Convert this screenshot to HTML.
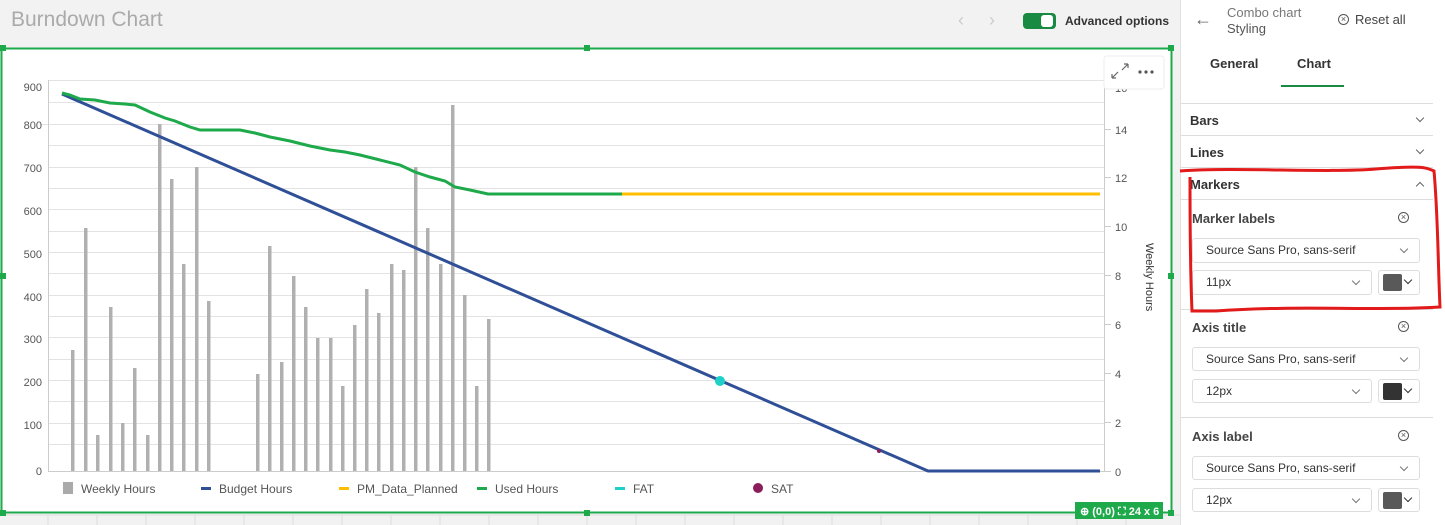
<!DOCTYPE html>
<html><head><meta charset="utf-8"><style>
*{box-sizing:border-box;margin:0;padding:0}
body{width:1445px;height:525px;overflow:hidden;background:#f2f2f2;font-family:"Liberation Sans",sans-serif;position:relative}
.abs{position:absolute}
.panel{left:1180px;top:0;width:265px;height:525px;background:#fff;border-left:1px solid #e0e0e0}
.row{position:absolute;left:0;width:252px;height:32px;border-top:1px solid #ddd;font-size:13px;font-weight:bold;color:#333;padding:9px 0 0 9px}
.chev{position:absolute;right:10px;top:11px;width:6px;height:6px;border-right:1.4px solid #666;border-bottom:1.4px solid #666;transform:rotate(45deg)}
.chevu{transform:rotate(225deg);top:15px}
.sel{position:absolute;border:1px solid #ddd;border-radius:3px;background:#fff;font-size:12px;color:#333;padding:0 0 0 13px;line-height:23px}
.sel .chev{top:7px;right:12px;width:6px;height:6px;border-color:#777;border-width:1.3px}
.sw{position:absolute;border:1px solid #ddd;border-radius:3px;width:42px;height:24px;background:#fff}
.sw i{position:absolute;left:4px;top:3px;width:19px;height:17px;border-radius:2px}
.sw .chev{top:6px;right:8px;width:6px;height:6px;border-color:#333;border-width:1.6px}
.h{position:absolute;left:11px;font-size:13px;font-weight:bold;color:#444}
.x{position:absolute;width:11px;height:11px;border:1.3px solid #555;border-radius:50%;font-size:9px;line-height:8px;text-align:center;color:#555}
</style></head><body>
<div class="abs" style="left:11px;top:8px;font-size:21px;color:#aaa">Burndown Chart</div>
<div class="abs" style="left:958px;top:10px;font-size:18px;color:#ccc">‹</div>
<div class="abs" style="left:989px;top:10px;font-size:18px;color:#ccc">›</div>
<div class="abs" style="left:1023px;top:13px;width:33px;height:16px;background:#188a42;border-radius:4px"><div class="abs" style="left:18px;top:2px;width:12px;height:12px;background:#fff;border-radius:3px"></div></div>
<div class="abs" style="left:1065px;top:14px;font-size:12px;font-weight:bold;color:#333">Advanced options</div>

<svg class="abs" style="left:0;top:0" width="1180" height="525">
<g stroke="#ddd" stroke-width="1">
<line x1="0" y1="515" x2="1180" y2="515"/>
<line x1="48" y1="515" x2="48" y2="525"/><line x1="97" y1="515" x2="97" y2="525"/><line x1="146" y1="515" x2="146" y2="525"/><line x1="195" y1="515" x2="195" y2="525"/><line x1="244" y1="515" x2="244" y2="525"/><line x1="293" y1="515" x2="293" y2="525"/><line x1="342" y1="515" x2="342" y2="525"/><line x1="391" y1="515" x2="391" y2="525"/><line x1="440" y1="515" x2="440" y2="525"/><line x1="489" y1="515" x2="489" y2="525"/><line x1="538" y1="515" x2="538" y2="525"/><line x1="587" y1="515" x2="587" y2="525"/><line x1="636" y1="515" x2="636" y2="525"/><line x1="685" y1="515" x2="685" y2="525"/><line x1="734" y1="515" x2="734" y2="525"/><line x1="783" y1="515" x2="783" y2="525"/><line x1="832" y1="515" x2="832" y2="525"/><line x1="881" y1="515" x2="881" y2="525"/><line x1="930" y1="515" x2="930" y2="525"/><line x1="979" y1="515" x2="979" y2="525"/><line x1="1028" y1="515" x2="1028" y2="525"/><line x1="1077" y1="515" x2="1077" y2="525"/><line x1="1126" y1="515" x2="1126" y2="525"/>
</g>
<rect x="2" y="48" width="1170" height="465" fill="#fff"/>
<g stroke="#e3e3e3">
<line x1="48" x2="1104" y1="80.5" y2="80.5"/><line x1="48" x2="1104" y1="102.5" y2="102.5"/><line x1="40" x2="1104" y1="124.5" y2="124.5"/><line x1="48" x2="1104" y1="145.5" y2="145.5"/><line x1="48" x2="1104" y1="167.5" y2="167.5"/><line x1="48" x2="1104" y1="188.5" y2="188.5"/><line x1="48" x2="1104" y1="209.5" y2="209.5"/><line x1="48" x2="1104" y1="231.5" y2="231.5"/><line x1="48" x2="1104" y1="252.5" y2="252.5"/><line x1="48" x2="1104" y1="273.5" y2="273.5"/><line x1="48" x2="1104" y1="295.5" y2="295.5"/><line x1="48" x2="1104" y1="316.5" y2="316.5"/><line x1="48" x2="1104" y1="337.5" y2="337.5"/><line x1="48" x2="1104" y1="359.5" y2="359.5"/><line x1="48" x2="1104" y1="380.5" y2="380.5"/><line x1="48" x2="1104" y1="401.5" y2="401.5"/><line x1="48" x2="1104" y1="423.5" y2="423.5"/><line x1="48" x2="1104" y1="444.5" y2="444.5"/>
</g>
<line x1="48" x2="1104" y1="471.5" y2="471.5" stroke="#ccc"/>
<line x1="48.5" x2="48.5" y1="80" y2="472" stroke="#ccc"/>
<line x1="1104.5" x2="1104.5" y1="80" y2="472" stroke="#ccc"/>
<g stroke="#ccc"><line x1="1104" x2="1111" y1="471.5" y2="471.5"/><line x1="1104" x2="1111" y1="422.5" y2="422.5"/><line x1="1104" x2="1111" y1="373.5" y2="373.5"/><line x1="1104" x2="1111" y1="324.5" y2="324.5"/><line x1="1104" x2="1111" y1="275.5" y2="275.5"/><line x1="1104" x2="1111" y1="226.5" y2="226.5"/><line x1="1104" x2="1111" y1="177.5" y2="177.5"/><line x1="1104" x2="1111" y1="129.5" y2="129.5"/></g>
<g font-size="11" fill="#555" text-anchor="end" font-family="Liberation Sans">
<text x="42" y="91">900</text><text x="42" y="129">800</text><text x="42" y="172">700</text><text x="42" y="215">600</text><text x="42" y="258">500</text><text x="42" y="301">400</text><text x="42" y="343">300</text><text x="42" y="386">200</text><text x="42" y="429">100</text><text x="42" y="475">0</text>
</g>
<g font-size="11" fill="#555" font-family="Liberation Sans">
<text x="1115" y="476">0</text><text x="1115" y="427">2</text><text x="1115" y="378">4</text><text x="1115" y="329">6</text><text x="1115" y="280">8</text><text x="1115" y="231">10</text><text x="1115" y="182">12</text><text x="1115" y="134">14</text><text x="1115" y="92">16</text>
<text transform="translate(1146,243) rotate(90)" font-size="11" fill="#333">Weekly Hours</text>
</g>
<g fill="#b0b0b0">
<rect x="71" y="350" width="3.5" height="121"/><rect x="84" y="228" width="3.5" height="243"/><rect x="96" y="435" width="3.5" height="36"/><rect x="109" y="307" width="3.5" height="164"/><rect x="121" y="423" width="3.5" height="48"/><rect x="133" y="368" width="3.5" height="103"/><rect x="146" y="435" width="3.5" height="36"/><rect x="158" y="124" width="3.5" height="347"/><rect x="170" y="179" width="3.5" height="292"/><rect x="182" y="264" width="3.5" height="207"/><rect x="195" y="167" width="3.5" height="304"/><rect x="207" y="301" width="3.5" height="170"/>
<rect x="256" y="374" width="3.5" height="97"/><rect x="268" y="246" width="3.5" height="225"/><rect x="280" y="362" width="3.5" height="109"/><rect x="292" y="276" width="3.5" height="195"/><rect x="304" y="307" width="3.5" height="164"/><rect x="316" y="338" width="3.5" height="133"/><rect x="329" y="338" width="3.5" height="133"/><rect x="341" y="386" width="3.5" height="85"/><rect x="353" y="325" width="3.5" height="146"/><rect x="365" y="289" width="3.5" height="182"/><rect x="377" y="313" width="3.5" height="158"/><rect x="390" y="264" width="3.5" height="207"/><rect x="402" y="270" width="3.5" height="201"/><rect x="414" y="167" width="3.5" height="304"/><rect x="426" y="228" width="3.5" height="243"/><rect x="439" y="264" width="3.5" height="207"/><rect x="451" y="105" width="3.5" height="366"/><rect x="463" y="295" width="3.5" height="176"/><rect x="475" y="386" width="3.5" height="85"/><rect x="487" y="319" width="3.5" height="152"/>
</g>
<polyline fill="none" stroke="#2f4f97" stroke-width="3" points="62,94 928,471 1100,471"/>
<line x1="622" y1="194" x2="1100" y2="194" stroke="#ffbf00" stroke-width="3"/>
<polyline fill="none" stroke="#1ea94b" stroke-width="3" points="62,93 70,95 80,99 95,100 110,103 125,104 135,105 150,112 165,118 175,121 190,127 200,130 240,130 255,133 270,137 290,141 310,146 330,150 345,152 360,155 380,160 400,165 415,172 430,177 445,181 455,187 470,190 488,194 622,194"/>
<circle cx="720" cy="381" r="5" fill="#1dd1c9"/>
<circle cx="879" cy="451" r="2" fill="#8b1d5a"/>
<g font-size="12" fill="#555" font-family="Liberation Sans">
<rect x="63" y="482" width="10" height="12" fill="#aaa"/><text x="81" y="493">Weekly Hours</text>
<rect x="201" y="487" width="10" height="3" fill="#2f4f97"/><text x="219" y="493">Budget Hours</text>
<rect x="339" y="487" width="10" height="3" fill="#ffbf00"/><text x="357" y="493">PM_Data_Planned</text>
<rect x="477" y="487" width="10" height="3" fill="#1ea94b"/><text x="495" y="493">Used Hours</text>
<rect x="615" y="487" width="10" height="3" fill="#1dd1c9"/><text x="633" y="493">FAT</text>
<circle cx="758" cy="488" r="5" fill="#8b1d5a"/><text x="771" y="493">SAT</text>
</g>
<rect x="1.5" y="48.5" width="1170" height="464" fill="none" stroke="#1ea94b" stroke-width="2"/>
<g fill="#1ea94b"><rect x="0" y="45" width="6" height="6"/><rect x="584" y="45" width="6" height="6"/><rect x="1168" y="45" width="6" height="6"/><rect x="0" y="273" width="6" height="6"/><rect x="1168" y="273" width="6" height="6"/><rect x="0" y="510" width="6" height="6"/><rect x="584" y="510" width="6" height="6"/><rect x="1168" y="510" width="6" height="6"/></g>
<rect x="1075" y="502" width="88" height="17" fill="#1ea94b"/>
<text x="1080" y="515" font-size="11" fill="#fff" font-weight="bold" font-family="Liberation Sans">⊕ (0,0) ⛶ 24 x 6</text>
<rect x="1104" y="56" width="60" height="33" rx="3" fill="#fff" stroke="#eee"/>
<path d="M1112 78 l6-6 M1112 78 v-4 M1112 78 h4 M1128 64 l-6 6 M1128 64 v4 M1128 64 h-4" stroke="#666" stroke-width="1.2" fill="none"/>
<g fill="#555"><circle cx="1140" cy="72" r="1.6"/><circle cx="1146" cy="72" r="1.6"/><circle cx="1152" cy="72" r="1.6"/></g>
</svg>

<div class="abs panel">
<div class="abs" style="left:13px;top:9px;font-size:18px;color:#666">←</div>
<div class="abs" style="left:46px;top:5px;font-size:13px;color:#777;line-height:16px">Combo chart<br><span style="color:#555">Styling</span></div>
<div class="x" style="left:157px;top:14px">×</div>
<div class="abs" style="left:174px;top:12px;font-size:13px;color:#444">Reset all</div>
<div class="abs" style="left:29px;top:56px;font-size:13px;font-weight:bold;color:#333">General</div>
<div class="abs" style="left:116px;top:56px;font-size:13px;font-weight:bold;color:#333">Chart</div>
<div class="abs" style="left:100px;top:85px;width:63px;height:2px;background:#188a42"></div>
<div class="row" style="top:103px">Bars<div class="chev"></div></div>
<div class="row" style="top:135px">Lines<div class="chev"></div></div>
<div class="row" style="top:167px">Markers<div class="chev chevu"></div></div>
<div class="abs" style="left:0;top:199px;width:252px;border-top:1px solid #ddd"></div>
<div class="h" style="top:211px">Marker labels</div><div class="x" style="left:217px;top:212px">×</div>
<div class="sel" style="left:11px;top:238px;width:228px;height:25px">Source Sans Pro, sans-serif<div class="chev"></div></div>
<div class="sel" style="left:11px;top:270px;width:180px;height:25px">11px<div class="chev"></div></div>
<div class="sw" style="left:197px;top:270px;height:25px"><i style="background:#595959"></i><div class="chev"></div></div>
<div class="abs" style="left:0;top:309px;width:252px;border-top:1px solid #ddd"></div>
<div class="h" style="top:320px">Axis title</div><div class="x" style="left:217px;top:321px">×</div>
<div class="sel" style="left:11px;top:347px;width:228px;height:24px">Source Sans Pro, sans-serif<div class="chev"></div></div>
<div class="sel" style="left:11px;top:379px;width:180px;height:24px">12px<div class="chev"></div></div>
<div class="sw" style="left:197px;top:379px"><i style="background:#333"></i><div class="chev"></div></div>
<div class="abs" style="left:0;top:417px;width:252px;border-top:1px solid #ddd"></div>
<div class="h" style="top:429px">Axis label</div><div class="x" style="left:217px;top:430px">×</div>
<div class="sel" style="left:11px;top:456px;width:228px;height:24px">Source Sans Pro, sans-serif<div class="chev"></div></div>
<div class="sel" style="left:11px;top:488px;width:180px;height:24px">12px<div class="chev"></div></div>
<div class="sw" style="left:197px;top:488px"><i style="background:#595959"></i><div class="chev"></div></div>
</div>
<svg class="abs" style="left:1176px;top:165px" width="269" height="150"><path d="M4 6 C60 2,150 8,200 4 S250 3,258 6 C262 50,262 100,264 142 C200 146,120 140,40 146 L16 146 C14 100,14 50,14 12" fill="none" stroke="#e21a1a" stroke-width="3"/></svg>
</body></html>
